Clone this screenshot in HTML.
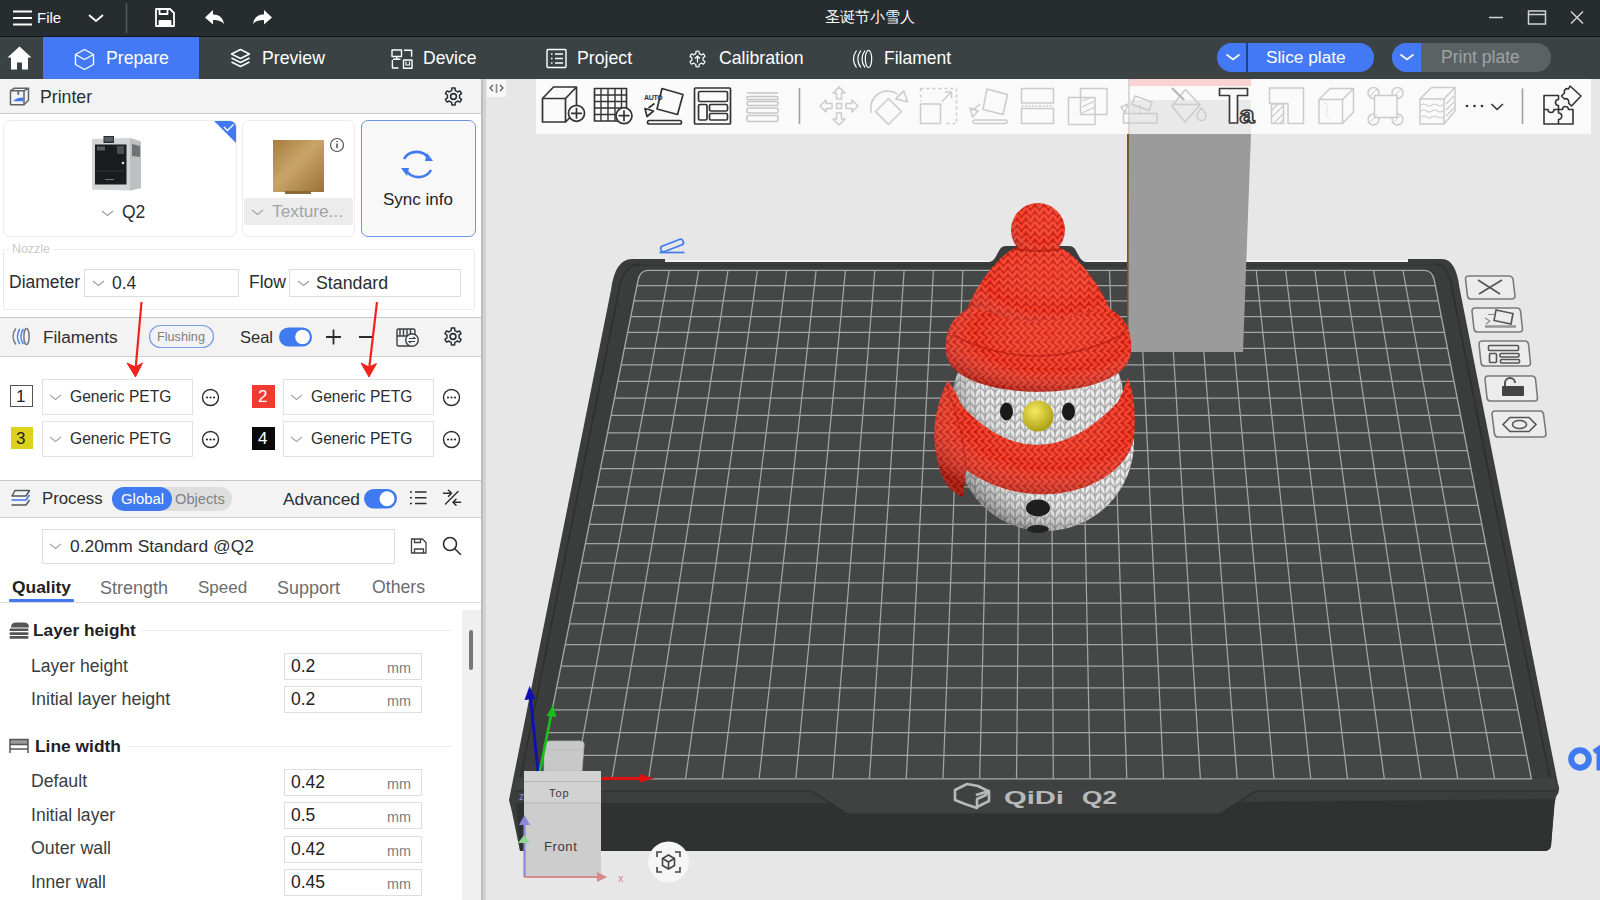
<!DOCTYPE html>
<html><head><meta charset="utf-8">
<style>
*{box-sizing:border-box;margin:0;padding:0}
html,body{width:1600px;height:900px;overflow:hidden;background:#e7e7e7;font-family:"Liberation Sans",sans-serif;position:relative}
.a{position:absolute}
.t{position:absolute;white-space:nowrap;line-height:1}
svg{position:absolute;overflow:visible}
</style></head><body>
<!-- title bar -->
<div class="a" style="left:0;top:0;width:1600px;height:37px;background:#272c2e"></div>
<svg style="left:0;top:0" width="300" height="37">
 <g stroke="#fff" stroke-width="2" fill="none">
  <path d="M13 11.5h19M13 18h19M13 24.5h19"/>
  <path d="M89 15l7 6 7-6" stroke-width="1.8"/>
 </g>
 <path d="M126.5 3v30" stroke="#555b5d" stroke-width="1.5"/>
 <g fill="none" stroke="#fff" stroke-width="1.8" stroke-linejoin="round">
  <path d="M156 9h14l4 4v13h-18z"/><path d="M159.5 9v5h8v-5"/><path d="M159.5 26v-5h11v5z" fill="#fff"/>
 </g>
 <path d="M205 17.5l8-7.5v4.5c6 0 10 3 11 9.5-2.5-3-5.5-4-11-4v4.5z" fill="#fff"/>
 <path d="M272 17.5l-8-7.5v4.5c-6 0-10 3-11 9.5 2.5-3 5.5-4 11-4v4.5z" fill="#fff"/>
</svg>
<div class="t" style="left:37px;top:10px;font-size:15px;color:#fff">File</div>
<div class="t" style="left:825px;top:10px;font-size:14.5px;color:#fff">圣诞节小雪人</div>
<svg style="left:1480px;top:0" width="120" height="37">
 <g stroke="#d0d3d4" stroke-width="1.5" fill="none">
  <path d="M1489 17.5h14" transform="translate(-1480 0)"/>
  <rect x="48.5" y="11" width="17" height="13" /><path d="M48.5 14.5h17"/>
  <path d="M91 11.5l12 12M103 11.5l-12 12"/>
 </g>
</svg>
<div class="a" style="left:0;top:36px;width:1600px;height:1.2px;background:#141718"></div>
<!-- tab bar -->
<div class="a" style="left:0;top:37.2px;width:1600px;height:41.8px;background:#3a4244"></div>
<div class="a" style="left:43px;top:37px;width:156px;height:42px;background:#4479f5"></div>
<svg style="left:0;top:38px" width="1000" height="42">
 <path d="M19.5 8.5l12 11h-3.5v12h-6v-7h-5v7h-6v-12h-3.5z" fill="#fff"/>
 <g fill="none" stroke="#fff" stroke-width="1.4" stroke-linejoin="round">
  <path d="M84.5 11.5l9 5v10l-9 5-9-5v-10z"/><path d="M75.5 16.5l9 5 9-5M84.5 21.5"/>
  <path d="M240.5 11.5l9 4.5-9 4.5-9-4.5z"/><path d="M231.5 20l9 4.5 9-4.5"/><path d="M231.5 24l9 4.5 9-4.5"/>
  <rect x="392" y="12" width="9.5" height="6.5"/><path d="M396.7 18.5v2.5M393 21.2h7.5M392.4 22v8h6M404 12.3h7.6v6.4"/><rect x="403.5" y="22" width="8.5" height="8.2"/><path d="M406 23.5v3.5h3.5v-3.5" stroke-width="1.1"/>
  <rect x="547" y="11.5" width="19" height="18" rx="1"/><path d="M551 16h1.5M555 16h8M551 20.5h1.5M555 20.5h8M551 25h1.5M555 25h8"/>
  <path d="M-1.95 -6.31L-1.74 -9.03A9.2 9.2 0 0 1 1.74 -9.03L1.95 -6.31A6.6 6.6 0 0 1 4.49 -4.84L4.49 -4.84L6.96 -6.02A9.2 9.2 0 0 1 8.69 -3.01L6.44 -1.46A6.6 6.6 0 0 1 6.44 1.46L6.44 1.46L8.69 3.01A9.2 9.2 0 0 1 6.96 6.02L4.49 4.84A6.6 6.6 0 0 1 1.95 6.31L1.95 6.31L1.74 9.03A9.2 9.2 0 0 1 -1.74 9.03L-1.95 6.31A6.6 6.6 0 0 1 -4.49 4.84L-4.49 4.84L-6.96 6.02A9.2 9.2 0 0 1 -8.69 3.01L-6.44 1.46A6.6 6.6 0 0 1 -6.44 -1.46L-6.44 -1.46L-8.69 -3.01A9.2 9.2 0 0 1 -6.96 -6.02L-4.49 -4.84A6.6 6.6 0 0 1 -1.95 -6.31Z" transform="translate(697.5 21) scale(.86)" stroke-linejoin="round"/><path d="M697.5 24.5v-6M695 20.5l2.5-2.5 2.5 2.5" stroke-width="1.3"/>
 </g>
 <g fill="none" stroke="#fff" stroke-width="1.2">
  <path d="M856.5 12.5Q850.5 21 856.5 29.5"/><path d="M860.8 12.5Q854.8 21 860.8 29.5"/><path d="M865 12.5Q859 21 865 29.5"/><ellipse cx="868.5" cy="21" rx="3.2" ry="8.7"/>
 </g>
</svg>
<div class="t" style="left:106px;top:50px;font-size:17.7px;color:#fff">Prepare</div>
<div class="t" style="left:262px;top:50px;font-size:17.7px;color:#fff">Preview</div>
<div class="t" style="left:423px;top:50px;font-size:17.5px;color:#fff">Device</div>
<div class="t" style="left:577px;top:50px;font-size:17.7px;color:#fff">Project</div>
<div class="t" style="left:719px;top:50px;font-size:17.7px;color:#fff">Calibration</div>
<div class="t" style="left:884px;top:50px;font-size:17.5px;color:#fff">Filament</div>
<!-- slice / print buttons -->
<div class="a" style="left:1217px;top:43px;width:157px;height:29px;border-radius:14.5px;background:#4479f5"></div>
<div class="a" style="left:1246px;top:43px;width:1.6px;height:29px;background:#1f3f8f"></div>
<div class="t" style="left:1266px;top:49px;font-size:17.3px;color:#fff">Slice plate</div>
<div class="a" style="left:1392px;top:43px;width:159px;height:29px;border-radius:14.5px;background:#5b6264;overflow:hidden"><div class="a" style="left:0;top:0;width:29px;height:29px;background:#4479f5"></div></div>
<div class="t" style="left:1441px;top:49px;font-size:17.5px;color:#9ea3a5">Print plate</div>
<svg style="left:0;top:0" width="1600" height="80">
 <g stroke="#fff" stroke-width="1.6" fill="none"><path d="M1226.5 54.5l6.5 5 6.5-5"/><path d="M1400.5 54.5l6.5 5 6.5-5"/></g>
</svg>
<!-- left panel -->
<div class="a" style="left:0;top:79px;width:481px;height:821px;background:#fff"></div>
<div class="a" style="left:481px;top:79px;width:1.5px;height:821px;background:#bcbcbc"></div>
<div class="a" style="left:482.5px;top:79px;width:3.5px;height:821px;background:#d3d3d3"></div>
<!-- printer header -->
<div class="a" style="left:0;top:79px;width:481px;height:35px;background:#f3f3f3;border-bottom:1.5px solid #cbcbcb"></div>
<svg style="left:0;top:79px" width="481" height="35">
 <g fill="none" stroke="#5f6365" stroke-width="1.5" stroke-linejoin="round">
  <path d="M10.5 11.8l3.5-2.5h14.5v12l-4.5 4.5h-13.5z"/><path d="M10.5 11.8h13.5v13.7M24 11.8l4.5-2.5"/><path d="M18.3 12v3.8" stroke-width="1.8"/>
 </g>
 <path d="M13 22.3c2.5-3 6-3.8 10.3-3.8v3.8z" fill="#3f7af0"/>
 <g transform="translate(453.5 17.5)" fill="none" stroke="#2b2e30" stroke-width="1.6">
  <path d="M-1.95 -6.31L-1.74 -9.03A9.2 9.2 0 0 1 1.74 -9.03L1.95 -6.31A6.6 6.6 0 0 1 4.49 -4.84L4.49 -4.84L6.96 -6.02A9.2 9.2 0 0 1 8.69 -3.01L6.44 -1.46A6.6 6.6 0 0 1 6.44 1.46L6.44 1.46L8.69 3.01A9.2 9.2 0 0 1 6.96 6.02L4.49 4.84A6.6 6.6 0 0 1 1.95 6.31L1.95 6.31L1.74 9.03A9.2 9.2 0 0 1 -1.74 9.03L-1.95 6.31A6.6 6.6 0 0 1 -4.49 4.84L-4.49 4.84L-6.96 6.02A9.2 9.2 0 0 1 -8.69 3.01L-6.44 1.46A6.6 6.6 0 0 1 -6.44 -1.46L-6.44 -1.46L-8.69 -3.01A9.2 9.2 0 0 1 -6.96 -6.02L-4.49 -4.84A6.6 6.6 0 0 1 -1.95 -6.31Z" stroke-linejoin="round" transform="scale(.93)"/>
  <circle r="2.9"/>
 </g>
</svg>
<div class="t" style="left:40px;top:89px;font-size:17.7px;color:#2b2e30">Printer</div>
<!-- printer cards -->
<div class="a" style="left:3px;top:120px;width:234px;height:117px;border:1px solid #ececec;border-radius:7px;background:#fff;overflow:hidden">
 <div class="a" style="right:0;top:0;width:0;height:0;border-top:22px solid #3f7af0;border-left:22px solid transparent"></div>
</div>
<svg style="left:0;top:0" width="481" height="300">
 <path d="M224 127l3.5 3.5 6-6" stroke="#fff" stroke-width="1.4" fill="none"/>
 <!-- printer image -->
 <path d="M92 139L130 138L141 141.5L141 188L130 190.5L92 189.5Z" fill="#d3d4d5"/>
 <path d="M130 138L141 141.5L141 188L130 190.5Z" fill="#bfc0c1"/>
 <rect x="95" y="144.5" width="31.5" height="40" fill="#1b1c1e"/>
 <path d="M132 144l8 2v11l-8-1z" fill="#707274"/>
 <rect x="103.5" y="136" width="10.5" height="7" fill="#2c2e30"/><rect x="104.5" y="137" width="8.5" height="4.5" fill="#56606a"/>
 <rect x="97" y="146.5" width="8" height="4" fill="#5a5c5e"/><rect x="117" y="146" width="7" height="8" fill="#4a4f55"/>
 <circle cx="123" cy="163" r="1.3" fill="#ddd"/>
 <path d="M105 179.5h9" stroke="#777" stroke-width="1"/><path d="M97 171h27" stroke="#3a3b3d" stroke-width=".8"/>
 <path d="M102 211l5.5 4.5 5.5-4.5" stroke="#9a9c9e" stroke-width="1.1" fill="none"/>
</svg>
<div class="t" style="left:122px;top:204px;font-size:17.5px;color:#2b2e30">Q2</div>
<div class="a" style="left:242px;top:120px;width:113px;height:117px;border:1px solid #ececec;border-radius:7px;background:#fff"></div>
<div class="a" style="left:244px;top:198px;width:109px;height:27px;background:#ececec;border-radius:2px"></div>
<svg style="left:0;top:0" width="481" height="300">
 <defs><linearGradient id="gold" x1="0" y1="0" x2="1" y2="1"><stop offset="0" stop-color="#a67c3e"/><stop offset=".45" stop-color="#c9a468"/><stop offset="1" stop-color="#9a7238"/></linearGradient></defs>
 <rect x="273" y="140" width="51" height="52" fill="url(#gold)"/>
 <rect x="285" y="191" width="26" height="3" fill="#8a6a3a"/>
 <circle cx="337" cy="145" r="6.5" fill="none" stroke="#555" stroke-width="1.2"/>
 <path d="M337 143.5v4.5M337 141v1" stroke="#555" stroke-width="1.6"/>
 <path d="M252 210l5.5 4.5 5.5-4.5" stroke="#a0a2a4" stroke-width="1.1" fill="none"/>
</svg>
<div class="t" style="left:272px;top:203px;font-size:17.3px;color:#a2a4a6">Texture...</div>
<div class="a" style="left:361px;top:120px;width:115px;height:117px;border:1.5px solid #6f93e6;border-radius:7px;background:#f8f8f8"></div>
<svg style="left:0;top:0" width="481" height="300">
 <g fill="none" stroke="#3f7af0" stroke-width="2.6">
  <path d="M404 159a14 13 0 0 1 25 0"/><path d="M431 170a14 13 0 0 1-25 0"/>
 </g>
 <path d="M427 153l6 8 -8 0z" fill="#3f7af0"/><path d="M407 176l-6-8 8 0z" fill="#3f7af0"/>
</svg>
<div class="t" style="left:383px;top:191px;font-size:17px;color:#1f2224">Sync info</div>
<!-- nozzle fieldset -->
<div class="a" style="left:3px;top:249px;width:472px;height:61px;border:1px solid #ebebeb;border-radius:2px"></div>
<div class="a" style="left:9px;top:243px;width:44px;height:12px;background:#fff"></div>
<div class="t" style="left:12px;top:243px;font-size:12.4px;color:#c8c9ca">Nozzle</div>
<div class="t" style="left:9px;top:274px;font-size:17.5px;color:#2b2e30">Diameter</div>
<div class="a" style="left:84px;top:269px;width:155px;height:28px;border:1px solid #dcdcdc;background:#fff"></div>
<div class="t" style="left:112px;top:275px;font-size:17.5px;color:#2b2e30">0.4</div>
<div class="t" style="left:249px;top:274px;font-size:17.5px;color:#2b2e30">Flow</div>
<div class="a" style="left:289px;top:269px;width:172px;height:28px;border:1px solid #dcdcdc;background:#fff"></div>
<div class="t" style="left:316px;top:275px;font-size:17.8px;color:#2b2e30">Standard</div>
<svg style="left:0;top:0" width="481" height="300">
 <g stroke="#9a9c9e" stroke-width="1.1" fill="none"><path d="M93 281l5.5 4.5 5.5-4.5"/><path d="M298 281l5.5 4.5 5.5-4.5"/></g>
</svg>
<!-- filaments header -->
<div class="a" style="left:0;top:316.5px;width:481px;height:40px;background:#f3f3f3;border-top:1.5px solid #c8c8c8;border-bottom:1.5px solid #cfcfcf"></div>
<svg style="left:0;top:317px" width="481" height="40">
 <g fill="none" stroke="#777b7d" stroke-width="1.2">
  <path d="M15.8 11.5Q10.3 19.5 15.8 27.5" stroke-width="1.5"/><path d="M19.8 12Q15 19.5 19.8 27" stroke="#4d7fe8" stroke-width="1.5"/><path d="M23.3 12Q18.5 19.5 23.3 27" stroke="#4d7fe8" stroke-width="1.5"/><ellipse cx="26.5" cy="19.5" rx="2.6" ry="8" stroke-width="1.5"/>
 </g>
 <rect x="149.5" y="8.5" width="64" height="22" rx="11" fill="#f2f2f2" stroke="#7c9fe8" stroke-width="1.2"/>
 <rect x="279" y="10.5" width="33" height="19" rx="9.5" fill="#3f7af0"/>
 <circle cx="302.5" cy="20" r="7.3" fill="#fff"/>
 <g stroke="#2b2e30" stroke-width="1.8"><path d="M326 20h15M333.5 12.5v15M359 20h14"/></g>
 <g fill="none" stroke="#3d4042" stroke-width="1.4">
  <path d="M410 29h-11.5a1.5 1.5 0 0 1-1.5-1.5v-14a1.5 1.5 0 0 1 1.5-1.5h15a1.5 1.5 0 0 1 1.5 1.5v4"/>
  <path d="M397 19h10M400 12v7M403.5 12v7M407 12v7M410.5 12v5"/>
  <circle cx="412" cy="23" r="6.3" fill="#f3f3f3"/>
  <path d="M409 21.5h6l-1.5-1.5M415 24.5h-6l1.5 1.5" stroke-width="1.1"/>
 </g>
 <g transform="translate(453 19.5)" fill="none" stroke="#2b2e30" stroke-width="1.6">
  <path d="M-1.95 -6.31L-1.74 -9.03A9.2 9.2 0 0 1 1.74 -9.03L1.95 -6.31A6.6 6.6 0 0 1 4.49 -4.84L4.49 -4.84L6.96 -6.02A9.2 9.2 0 0 1 8.69 -3.01L6.44 -1.46A6.6 6.6 0 0 1 6.44 1.46L6.44 1.46L8.69 3.01A9.2 9.2 0 0 1 6.96 6.02L4.49 4.84A6.6 6.6 0 0 1 1.95 6.31L1.95 6.31L1.74 9.03A9.2 9.2 0 0 1 -1.74 9.03L-1.95 6.31A6.6 6.6 0 0 1 -4.49 4.84L-4.49 4.84L-6.96 6.02A9.2 9.2 0 0 1 -8.69 3.01L-6.44 1.46A6.6 6.6 0 0 1 -6.44 -1.46L-6.44 -1.46L-8.69 -3.01A9.2 9.2 0 0 1 -6.96 -6.02L-4.49 -4.84A6.6 6.6 0 0 1 -1.95 -6.31Z" stroke-linejoin="round" transform="scale(.93)"/>
  <circle r="2.9"/>
 </g>
</svg>
<div class="t" style="left:43px;top:329px;font-size:17.2px;color:#2b2e30">Filaments</div>
<div class="t" style="left:157px;top:331px;font-size:12.7px;color:#7d8082">Flushing</div>
<div class="t" style="left:240px;top:329px;font-size:16.5px;color:#2b2e30">Seal</div>
<!-- filament rows -->
<div class="a" style="left:10px;top:385px;width:23px;height:22px;border:1.2px solid #555;background:#fff"></div>
<div class="t" style="left:16px;top:388px;font-size:17px;color:#1f2224">1</div>
<div class="a" style="left:252px;top:385px;width:23px;height:23px;background:#f03a32"></div>
<div class="t" style="left:258px;top:388px;font-size:17px;color:#fff">2</div>
<div class="a" style="left:11px;top:427px;width:22px;height:22px;background:#dcd21c"></div>
<div class="t" style="left:16px;top:430px;font-size:17px;color:#1f2224">3</div>
<div class="a" style="left:252px;top:427px;width:23px;height:23px;background:#0a0a0a"></div>
<div class="t" style="left:258px;top:430px;font-size:17px;color:#fff">4</div>
<div class="a" style="left:42px;top:379px;width:151px;height:36px;border:1px solid #e1e1e1;background:#fff"></div>
<div class="a" style="left:283px;top:379px;width:151px;height:36px;border:1px solid #e1e1e1;background:#fff"></div>
<div class="a" style="left:42px;top:421px;width:151px;height:36px;border:1px solid #e1e1e1;background:#fff"></div>
<div class="a" style="left:283px;top:421px;width:151px;height:36px;border:1px solid #e1e1e1;background:#fff"></div>
<div class="t" style="left:70px;top:389px;font-size:15.6px;color:#2b2e30">Generic PETG</div>
<div class="t" style="left:311px;top:389px;font-size:15.6px;color:#2b2e30">Generic PETG</div>
<div class="t" style="left:70px;top:431px;font-size:15.6px;color:#2b2e30">Generic PETG</div>
<div class="t" style="left:311px;top:431px;font-size:15.6px;color:#2b2e30">Generic PETG</div>
<svg style="left:0;top:0" width="481" height="900">
 <g stroke="#a4a6a8" stroke-width="1.1" fill="none">
  <path d="M50 395l5.5 4.5 5.5-4.5"/><path d="M291 395l5.5 4.5 5.5-4.5"/><path d="M50 437l5.5 4.5 5.5-4.5"/><path d="M291 437l5.5 4.5 5.5-4.5"/>
 </g>
 <g fill="none" stroke="#2b2e30" stroke-width="1.4">
  <circle cx="210.5" cy="397.5" r="8"/><circle cx="451.5" cy="397.5" r="8"/><circle cx="210.5" cy="439.5" r="8"/><circle cx="451.5" cy="439.5" r="8"/>
 </g>
 <g fill="#2b2e30">
  <circle cx="207" cy="397.5" r="1.1"/><circle cx="210.5" cy="397.5" r="1.1"/><circle cx="214" cy="397.5" r="1.1"/>
  <circle cx="448" cy="397.5" r="1.1"/><circle cx="451.5" cy="397.5" r="1.1"/><circle cx="455" cy="397.5" r="1.1"/>
  <circle cx="207" cy="439.5" r="1.1"/><circle cx="210.5" cy="439.5" r="1.1"/><circle cx="214" cy="439.5" r="1.1"/>
  <circle cx="448" cy="439.5" r="1.1"/><circle cx="451.5" cy="439.5" r="1.1"/><circle cx="455" cy="439.5" r="1.1"/>
 </g>
 <!-- red arrows -->
 <g stroke="#f0231c" stroke-width="2.2" fill="#f0231c">
  <path d="M141.5 302L135.5 370" fill="none"/><path d="M127 363l8.5 14 7-14-7 4z" stroke-width="1"/>
  <path d="M377 302L369 370" fill="none"/><path d="M361 363l8 14 7.5-13.5-7.5 3.5z" stroke-width="1"/>
 </g>
</svg>
<!-- process header -->
<div class="a" style="left:0;top:479.5px;width:481px;height:38.5px;background:#f3f3f3;border-top:1.5px solid #c8c8c8;border-bottom:1.5px solid #cfcfcf"></div>
<svg style="left:0;top:480px" width="481" height="40">
 <g fill="none" stroke="#55595b" stroke-width="1.5" stroke-linejoin="round">
  <path d="M15 10.5h14.5l-3.5 5.5h-14z"/><path d="M11.5 25h14.5l3.5-5"/>
 </g>
 <path d="M11.5 20h14.5l3.5-5" stroke="#3f7af0" stroke-width="1.5" fill="none" stroke-linejoin="round"/>
 <rect x="112" y="7" width="120" height="24" rx="12" fill="#dedede"/>
 <rect x="112" y="7" width="60" height="24" rx="12" fill="#3f7af0"/>
 <rect x="364" y="9" width="33" height="19.5" rx="9.75" fill="#3f7af0"/>
 <circle cx="387" cy="18.75" r="7.5" fill="#fff"/>
 <g stroke="#2b2e30" stroke-width="1.7">
  <path d="M415 12h11.5M415 17.75h11.5M415 23.5h11.5"/><path d="M410 12h2M410 17.75h2M410 23.5h2"/>
 </g>
 <g stroke="#2b2e30" stroke-width="1.5" fill="none" stroke-linejoin="round" stroke-linecap="round">
  <path d="M445.5 24l12.5-12.5"/><path d="M443.5 13.3h8M448.5 10.3l3 3-3 3M460.5 22.2h-7.5M456 19.2l-3 3 3 3"/>
 </g>
</svg>
<div class="t" style="left:42px;top:491px;font-size:16.8px;color:#2b2e30">Process</div>
<div class="t" style="left:121px;top:492px;font-size:14.9px;color:#fff">Global</div>
<div class="t" style="left:175px;top:492px;font-size:14.7px;color:#808385">Objects</div>
<div class="t" style="left:283px;top:491px;font-size:17.3px;color:#2b2e30">Advanced</div>
<!-- preset combo -->
<div class="a" style="left:42px;top:529px;width:353px;height:35px;border:1px solid #dedede;background:#fff"></div>
<div class="t" style="left:70px;top:538px;font-size:17.4px;color:#2b2e30">0.20mm Standard @Q2</div>
<svg style="left:0;top:0" width="481" height="900">
 <path d="M50 544l5.5 4.5 5.5-4.5" stroke="#a4a6a8" stroke-width="1.1" fill="none"/>
 <g fill="none" stroke="#3d4042" stroke-width="1.3" stroke-linejoin="round">
  <path d="M411.5 539h11l3.5 3.5v10.5h-14.5z"/><path d="M414.5 539v3.5h6v-3.5M414.5 553v-4h9v4"/>
 </g>
 <g fill="none" stroke="#2b2e30" stroke-width="1.6">
  <circle cx="450" cy="544" r="6.5"/><path d="M454.8 548.8l6 6"/>
 </g>
</svg>
<!-- tabs -->
<div class="t" style="left:12px;top:579px;font-size:17.4px;font-weight:bold;color:#1f2224">Quality</div>
<div class="t" style="left:100px;top:579px;font-size:18px;color:#6a6d70">Strength</div>
<div class="t" style="left:198px;top:579px;font-size:17px;color:#6a6d70">Speed</div>
<div class="t" style="left:277px;top:579px;font-size:18px;color:#6a6d70">Support</div>
<div class="t" style="left:372px;top:579px;font-size:17.7px;color:#6a6d70">Others</div>
<div class="a" style="left:0;top:601.5px;width:481px;height:1.5px;background:#dcdcdc"></div>
<div class="a" style="left:9px;top:599px;width:65px;height:3px;background:#3f7af0;border-radius:1px"></div>
<!-- scroll -->
<div class="a" style="left:462px;top:610px;width:19px;height:290px;background:#f0f0f0"></div>
<div class="a" style="left:469px;top:630px;width:3.5px;height:40px;background:#777;border-radius:2px"></div>
<!-- settings -->
<svg style="left:0;top:0" width="481" height="900">
 <g fill="#555" >
  <path d="M11 627.5q0-5 5-5h8q5 0 5 5z"/>
  <rect x="9.5" y="628.5" width="19" height="2.6" rx="1.2"/><rect x="9.5" y="632.3" width="19" height="2.6" rx="1.2"/><rect x="9.5" y="636.1" width="19" height="2.6" rx="1.2"/>
 </g>
 <path d="M142 630.5h310" stroke="#ececec" stroke-width="1"/>
 <g fill="none" stroke="#555" stroke-width="1.5">
  <rect x="10" y="739.5" width="18" height="5" fill="#999"/><path d="M10 745v8M28 745v8M10 749h18"/>
 </g>
 <path d="M128 746.5h324" stroke="#ececec" stroke-width="1"/>
</svg>
<div class="t" style="left:33px;top:622px;font-size:17.3px;font-weight:bold;color:#1f2224">Layer height</div>
<div class="t" style="left:35px;top:738px;font-size:17.4px;font-weight:bold;color:#1f2224">Line width</div>
<div class="t" style="left:31px;top:658px;font-size:17.6px;color:#3a3d40">Layer height</div>
<div class="t" style="left:31px;top:691px;font-size:17.9px;color:#3a3d40">Initial layer height</div>
<div class="t" style="left:31px;top:773px;font-size:17.7px;color:#3a3d40">Default</div>
<div class="t" style="left:31px;top:807px;font-size:17.6px;color:#3a3d40">Initial layer</div>
<div class="t" style="left:31px;top:840px;font-size:17.8px;color:#3a3d40">Outer wall</div>
<div class="t" style="left:31px;top:874px;font-size:17.5px;color:#3a3d40">Inner wall</div>
<div class="a" style="left:283.5px;top:652.5px;width:138px;height:27px;border:1px solid #dedede;background:#fff"></div>
<div class="a" style="left:283.5px;top:685.5px;width:138px;height:27px;border:1px solid #dedede;background:#fff"></div>
<div class="a" style="left:283.5px;top:768.5px;width:138px;height:27px;border:1px solid #dedede;background:#fff"></div>
<div class="a" style="left:283.5px;top:802px;width:138px;height:27px;border:1px solid #dedede;background:#fff"></div>
<div class="a" style="left:283.5px;top:835.5px;width:138px;height:27px;border:1px solid #dedede;background:#fff"></div>
<div class="a" style="left:283.5px;top:869px;width:138px;height:27px;border:1px solid #dedede;background:#fff"></div>
<div class="t" style="left:291px;top:658px;font-size:17.5px;color:#1f2224">0.2</div>
<div class="t" style="left:291px;top:691px;font-size:17.5px;color:#1f2224">0.2</div>
<div class="t" style="left:291px;top:774px;font-size:17.5px;color:#1f2224">0.42</div>
<div class="t" style="left:291px;top:807px;font-size:17.5px;color:#1f2224">0.5</div>
<div class="t" style="left:291px;top:841px;font-size:17.5px;color:#1f2224">0.42</div>
<div class="t" style="left:291px;top:874px;font-size:17.5px;color:#1f2224">0.45</div>
<div class="t" style="left:387px;top:661px;font-size:14.4px;color:#7a7d80">mm</div>
<div class="t" style="left:387px;top:694px;font-size:14.4px;color:#7a7d80">mm</div>
<div class="t" style="left:387px;top:777px;font-size:14.4px;color:#7a7d80">mm</div>
<div class="t" style="left:387px;top:810px;font-size:14.4px;color:#7a7d80">mm</div>
<div class="t" style="left:387px;top:844px;font-size:14.4px;color:#7a7d80">mm</div>
<div class="t" style="left:387px;top:877px;font-size:14.4px;color:#7a7d80">mm</div>
<!-- viewport -->
<svg style="left:0;top:0" width="1600" height="900">
<path d="M632 259 L665 259 L665 262 L989 262 Q992 262 995 258 L1000 249 Q1002 246 1006 246 L1069 246 Q1073 246 1075 249 L1080 258 Q1083 262 1086 262 L1408 262 L1408 259 L1442 259 Q1456 259 1459.5 288 L1558 784 Q1561 790 1556 797 L1554 806 L1551 846 Q1550 851 1544 851 L520 851 L512 812 L509.0 800 L511.6 787 L611 290 Q615 259 632 259 Z" fill="#3b3d3d"/>
<path d="M665 261.2H989M1086 261.2H1408" stroke="#f7f7f7" stroke-width="1.2"/>
<path d="M640 264 Q622 266 619 290 L518.6 787" stroke="#2e3030" stroke-width="1.6" fill="none"/>
<path d="M1435 264 Q1450 266 1452.3 290 L1551.7 787" stroke="#2e3030" stroke-width="1.6" fill="none"/>
<path d="M624.0 265 L1446.3 265" stroke="#2f3131" stroke-width="1.2" opacity=".6"/>
<path d="M515.4 778 L1554.9 778 L1555.5 791 L1256 791 L1220 814 L847 814 L812 791 L514.8 791 Z" fill="#404242"/>
<path d="M514.8 791 L812 791 L847 814 L1220 814 L1256 791 L1555.5 791 L1555 797 L1256 802 L1240 814 L1220 814 L847 814 L830 803 L514.6 803 Z" fill="#3c3e3e"/>
<path d="M514.8 791 L812 791 L847 814 L1220 814 L1256 791 L1555.5 791" stroke="#2c2e2e" stroke-width="1.2" fill="none"/>
<path d="M516.4 803 L830 803 L847 814 L1220 814 L1240 802 L1555 799 L1551 846 Q1550 851 1544 851 L520 851 Z" fill="#303232"/>
<path d="M648 270.4 L1424.3 270.4 Q1432.3 270.4 1434.3 280.4 L1531.4 778.8 L538.4 778.8 L638 280.4 Q640 270.4 648 270.4 Z" fill="#444746" stroke="#a9abaa" stroke-width="1.3"/>
<path d="M669.3 270.4L575.2 778.8M637.0 285.5L1435.3 285.5M698.7 270.4L612.0 778.8M633.9 300.9L1438.2 300.9M728.0 270.4L648.7 778.8M630.8 316.5L1441.3 316.5M757.4 270.4L685.5 778.8M627.6 332.4L1444.4 332.4M786.7 270.4L722.3 778.8M624.4 348.4L1447.5 348.4M816.1 270.4L759.1 778.8M621.1 364.8L1450.7 364.8M845.4 270.4L795.8 778.8M617.8 381.4L1453.9 381.4M874.8 270.4L832.6 778.8M614.5 398.2L1457.2 398.2M904.1 270.4L869.4 778.8M611.0 415.4L1460.6 415.4M933.4 270.4L906.2 778.8M607.5 432.8L1464.0 432.8M962.8 270.4L943.0 778.8M604.0 450.5L1467.4 450.5M992.1 270.4L979.7 778.8M600.4 468.5L1470.9 468.5M1021.5 270.4L1016.5 778.8M596.8 486.8L1474.5 486.8M1050.8 270.4L1053.3 778.8M593.0 505.4L1478.1 505.4M1080.2 270.4L1090.1 778.8M589.3 524.3L1481.8 524.3M1109.5 270.4L1126.8 778.8M585.4 543.5L1485.5 543.5M1138.9 270.4L1163.6 778.8M581.5 563.0L1489.3 563.0M1168.2 270.4L1200.4 778.8M577.5 582.9L1493.2 582.9M1197.5 270.4L1237.2 778.8M573.5 603.2L1497.2 603.2M1226.9 270.4L1274.0 778.8M569.4 623.8L1501.2 623.8M1256.2 270.4L1310.7 778.8M565.2 644.7L1505.3 644.7M1285.6 270.4L1347.5 778.8M560.9 666.1L1509.4 666.1M1314.9 270.4L1384.3 778.8M556.6 687.8L1513.7 687.8M1344.3 270.4L1421.1 778.8M552.2 709.9L1518.0 709.9M1373.6 270.4L1457.8 778.8M547.7 732.5L1522.4 732.5M1403.0 270.4L1494.6 778.8M543.1 755.4L1526.8 755.4" stroke="#a3a5a4" stroke-width="1.25" fill="none"/>
<g fill="none" stroke="#b8baba" stroke-width="2.6" stroke-linejoin="round"><path d="M955 790l12-6 11 2 10 5-2 4-9 4v9l-12-4-10-4z"/><path d="M976 795l13-4v10l-12 6"/></g>
<text x="1004" y="803.5" font-family="Liberation Sans" font-weight="bold" font-size="18" fill="#b8baba" textLength="60" lengthAdjust="spacingAndGlyphs">QiDi</text>
<text x="1082" y="803.5" font-family="Liberation Sans" font-weight="bold" font-size="18" fill="#b8baba" textLength="35" lengthAdjust="spacingAndGlyphs">Q2</text>
</svg>
<svg style="left:0;top:0" width="1600" height="900">
 <defs>
  <pattern id="knitW" width="10" height="8" patternUnits="userSpaceOnUse">
   <rect width="10" height="8" fill="#c4c4c4"/>
   <path d="M0.8 -1.5l4 6M9.2 -1.5l-4 6M0.8 6.5l4 6M9.2 6.5l-4 6" stroke="#ebebeb" stroke-width="2.6" stroke-linecap="round"/>
   <path d="M5 0v8M0 0v8" stroke="#8e8e8e" stroke-width="0.9"/>
   <path d="M0.5 3.5l4.5 4.5 4.5-4.5" stroke="#9a9a9a" stroke-width="0.9" fill="none"/>
  </pattern>
  <pattern id="knitR" width="9" height="7" patternUnits="userSpaceOnUse">
   <rect width="9" height="7" fill="#c81c10"/>
   <path d="M0.8 -1.5l3.6 5.5M8.2 -1.5l-3.6 5.5M0.8 5.5l3.6 5.5M8.2 5.5l-3.6 5.5" stroke="#f5402c" stroke-width="2.6" stroke-linecap="round"/>
  </pattern>
  <pattern id="knitRH" width="7" height="9" patternUnits="userSpaceOnUse">
   <rect width="7" height="9" fill="#c81c10"/>
   <path d="M-1.5 0.8l5.5 3.6M-1.5 8.2l5.5-3.6M5.5 0.8l5.5 3.6M5.5 8.2l5.5-3.6" stroke="#f3402b" stroke-width="2.6" stroke-linecap="round"/>
  </pattern>
  <radialGradient id="shadeW" cx="0.62" cy="0.38" r="0.68">
   <stop offset="0" stop-color="#fff" stop-opacity="0.2"/><stop offset="0.6" stop-color="#fff" stop-opacity="0"/><stop offset="1" stop-color="#000" stop-opacity="0.4"/>
  </radialGradient>
  <radialGradient id="shadeR" cx="0.58" cy="0.32" r="0.72">
   <stop offset="0" stop-color="#ff6a50" stop-opacity="0.2"/><stop offset="0.6" stop-color="#fff" stop-opacity="0"/><stop offset="1" stop-color="#300" stop-opacity="0.35"/>
  </radialGradient>
  <radialGradient id="nose" cx="0.4" cy="0.35" r="0.7"><stop offset="0" stop-color="#f4ec60"/><stop offset="1" stop-color="#a99a10"/></radialGradient>
 </defs>
 <!-- tower -->
 <path d="M1128 133L1251 133L1243 352L1128 352Z" fill="#9b9b9b"/>
 <path d="M1127 133L1129 133L1128.5 330L1127 330Z" fill="#7a5528"/>
 <!-- pen icon -->
 <g stroke="#3f7af0" stroke-width="1.7" fill="none"><path d="M659.5 252.5h25"/><rect x="660" y="242.5" width="24" height="6" rx="3" transform="rotate(-21 672 245.5)"/></g>
 <!-- body -->
 <circle cx="1045" cy="442" r="89" fill="url(#knitW)"/>
 <circle cx="1045" cy="442" r="89" fill="url(#shadeW)"/>
 <!-- head -->
 <ellipse cx="1038" cy="395" rx="85" ry="68" fill="url(#knitW)"/>
 <ellipse cx="1038" cy="395" rx="85" ry="68" fill="url(#shadeW)"/>
 <!-- buttons -->
 <ellipse cx="1038" cy="508" rx="12" ry="8.5" fill="#1e1e1e"/>
 <ellipse cx="1038" cy="529" rx="11" ry="4" fill="#222"/>
 <!-- scarf -->
 <path id="scarf" d="M948 380 Q956 392 962 406 Q1038 486 1118 402 Q1124 390 1128 378 Q1137 400 1134 438 C1125 488 1035 518 966 470 L963 497 Q946 490 940 470 Q931 440 936 416 Q940 395 948 380Z" fill="url(#knitRH)"/>
 <path d="M948 380 Q956 392 962 406 Q1038 486 1118 402 Q1124 390 1128 378 Q1137 400 1134 438 C1125 488 1035 518 966 470 L963 497 Q946 490 940 470 Q931 440 936 416 Q940 395 948 380Z" fill="url(#shadeR)"/>
 <path d="M966 470 Q964 430 946 385" stroke="#a8140c" stroke-width="1.2" fill="none" opacity=".5"/>
 <!-- eyes nose -->
 <ellipse cx="1006.5" cy="411.5" rx="6.5" ry="9" fill="#1a1a1a"/>
 <ellipse cx="1068.5" cy="411.5" rx="6.5" ry="9" fill="#1a1a1a"/>
 <circle cx="1038" cy="416" r="15.5" fill="url(#nose)"/>
 <!-- pompom -->
 <circle cx="1038" cy="230" r="27" fill="url(#knitR)"/>
 <circle cx="1038" cy="230" r="27" fill="url(#shadeR)"/>
 <!-- hat cone -->
 <path d="M960 332 C968 292 1000 252 1018 247 L1058 247 C1076 252 1108 292 1118 332 Z" fill="url(#knitR)"/>
 <path d="M960 332 C968 292 1000 252 1018 247 L1058 247 C1076 252 1108 292 1118 332 Z" fill="url(#shadeR)"/>
 <path d="M1014 249 Q1038 253 1062 249" stroke="#8f1006" stroke-width="2" fill="none" opacity=".55"/>
 <!-- brim -->
 <path d="M946 352 C944 325 958 312 975 306 Q1038 336 1103 306 C1120 312 1133 325 1131 352 C1128 405 949 405 946 352Z" fill="url(#knitRH)"/>
 <path d="M946 352 C944 325 958 312 975 306 Q1038 336 1103 306 C1120 312 1133 325 1131 352 C1128 405 949 405 946 352Z" fill="url(#shadeR)"/>
 <path d="M952 335 Q1038 378 1126 333" stroke="#a8140c" stroke-width="1.6" fill="none" opacity=".55"/>
 <!-- plate side buttons -->
 <g fill="#ececec" stroke="#7a7a7a" stroke-width="1.6" stroke-linejoin="round">
  <path d="M1469 276h40q3 0 4 3l2 17q0 3-3 3h-41q-3 0-3.5-3l-2-17q0-3 3.5-3z"/>
  <path d="M1476 308h41q3 0 3.5 3l2 18q0 3-3 3h-42q-3 0-3.5-3l-2-18q0-3 3-3z"/>
  <path d="M1483 341h42q3 0 3.5 3l2 19q0 3-3 3h-43q-3 0-3.5-3l-2-19q0-3 3.5-3z"/>
  <path d="M1489 376h43q3 0 3.5 3l2 19q0 3-3 3h-44q-3 0-3.5-3l-2-19q0-3 3-3z"/>
  <path d="M1496 411h44q3 0 3.5 3l2.5 20q0 3-3 3h-45q-3 0-3.5-3l-2.5-20q0-3 3.5-3z"/>
 </g>
 <g stroke="#555" stroke-width="1.6" fill="none">
  <path d="M1478 280l22 14M1502 280l-23 14"/>
  <path d="M1496 310l17 3.5-2 10.5-17-3.5z"/><path d="M1485 326.5h31" stroke-width="2.6" stroke="#999"/><path d="M1485 318l5 3-4 3M1488 314.5h7" stroke="#888" stroke-width="1.1"/>
  <rect x="1488.5" y="345.5" width="30" height="5" rx="1"/><rect x="1489.5" y="353.5" width="7" height="9" rx="1"/><rect x="1500" y="353.5" width="19" height="3.5" rx="1"/><rect x="1500.5" y="359.5" width="19" height="3.5" rx="1"/>
  <path d="M1505 386v-3a5 5 0 0 1 10 0" stroke-width="2"/>
  <path d="M1503 424.5l7-7h19l7 7-7 7h-19z"/><ellipse cx="1519.5" cy="424.5" rx="7" ry="4"/>
 </g>
 <rect x="1502" y="386" width="22" height="10" rx="1" fill="#444"/>
 <!-- 01 label -->
 <ellipse cx="1580" cy="759" rx="8.8" ry="8.8" fill="none" stroke="#3f7af0" stroke-width="6"/><path d="M1594 752l5-3.5v22" stroke="#3f7af0" stroke-width="5" fill="none"/>
 <!-- view cube -->
 <path d="M544 771v-24q0-6 6-6h30q5 0 4 5l-2 25z" fill="#c8c8c8" stroke="#b0b0b0" stroke-width=".8"/>
 <path d="M546 750h37" stroke="#bdbdbd" stroke-width="1"/>
 <rect x="524" y="771" width="77" height="106" fill="#cdcdcd"/>
 <rect x="524" y="771" width="77" height="32" fill="#d2d2d2"/>
 <path d="M524 781.5h77M524 803h77" stroke="#b8b8b8" stroke-width="1.2"/>
 <text x="549" y="797" font-family="Liberation Sans" font-size="11" fill="#3a3a3a" letter-spacing="1">Top</text>
 <text x="544" y="851" font-family="Liberation Sans" font-size="13" fill="#3a3a3a" letter-spacing=".6">Front</text>
 <path d="M538 771L530 692" stroke="#1010b0" stroke-width="3"/><path d="M524.5 700l5-14 6 13z" fill="#1010b0"/>
 <path d="M540 771L552 710" stroke="#18c018" stroke-width="2.6"/><path d="M546.5 716l6.5-11 3.5 12z" fill="#18c018"/>
 <path d="M601 778.5h45" stroke="#e01010" stroke-width="2.8"/><path d="M640 774l14 4.5-14 4z" fill="#e01010"/>
 <path d="M524.5 877V822" stroke="#8a88d8" stroke-width="2.2"/><path d="M519 825l5.5-10 5.5 10z" fill="#8a88d8"/>
 <path d="M524 877h74" stroke="#d68a8a" stroke-width="2.2"/><path d="M597 872l10 5-10 5z" fill="#d68a8a"/>
 <path d="M518 843l6-8 6 8z" fill="#8cd88c"/>
 <text x="519" y="800" font-family="Liberation Sans" font-size="10" fill="#8a88d8">z</text>
 <text x="618" y="882" font-family="Liberation Sans" font-size="11" fill="#d68a8a">x</text>
 <!-- reset view -->
 <circle cx="668.5" cy="862" r="20.5" fill="#f6f6f6"/>
 <g stroke="#444" stroke-width="1.6" fill="none">
  <path d="M657 857v-5h5M675 852h5v5M680 867v5h-5M662 872h-5v-5"/>
  <path d="M668.5 855l6 3.5v7l-6 3.5-6-3.5v-7z"/><path d="M662.5 858.5l6 3.5 6-3.5M668.5 862v7"/>
 </g>
</svg>
<!-- toolbar -->
<div class="a" style="left:487px;top:80px;width:19px;height:17px;background:#f7f7f7"></div>
<svg style="left:0;top:0" width="1600" height="140">
 <g stroke="#555" stroke-width="1.2" fill="none"><path d="M493 85l-3 3 3 3M500 85l3 3-3 3"/><path d="M496.5 84v9" stroke="#888" stroke-width="1.6"/></g>
</svg>
<div class="a" style="left:536px;top:79px;width:1055px;height:54.5px;background:#fafafa"></div>
<div class="a" style="left:1129px;top:79px;width:122px;height:7px;background:#fbd2d2"></div>
<div class="a" style="left:1129px;top:100px;width:122px;height:33.5px;background:#e9e9e9"></div>
<div class="a" style="left:1128px;top:79px;width:1.5px;height:54.5px;background:#e2d7cf"></div>
<svg style="left:0;top:0" width="1600" height="140">
 <g fill="none" stroke="#333" stroke-width="1.7" stroke-linejoin="round">
  <path d="M542.5 98.5h23v23.5h-23z"/><path d="M542.5 98.5l11-11.5h23l-11 11.5M576.5 87v18M565.5 122l5-5"/>
  <circle cx="576.5" cy="113.3" r="8" fill="#fafafa"/><path d="M571 113.3h11M576.5 107.8v11"/>
  <rect x="594.5" y="88.5" width="32" height="32.5"/><path d="M601 88.5v32.5M608 88.5v32.5M615 88.5v32.5M621.5 88.5v32.5M594.5 95h32M594.5 101.5h32M594.5 108h32M594.5 114.5h32" stroke-width="1.4"/>
  <circle cx="624" cy="115.7" r="8" fill="#fafafa"/><path d="M618.5 115.7h11M624 110.2v11"/>
  <path d="M662 88.5l21 6-5.5 20-20.5-5.5z"/><path d="M654.5 103.5l-6 4.5"/><path d="M645 108.5l8.5 2.5-6.5 5.5z"/><rect x="647.5" y="120.5" width="34" height="3.5" rx="1.75"/>
  <rect x="694.5" y="88" width="36" height="36" rx="1"/><rect x="698.5" y="91.5" width="29" height="10" rx="1.5"/><rect x="698.5" y="104.5" width="8.5" height="15.5" rx="1.5"/><rect x="709.5" y="104.5" width="18" height="6.5" rx="1.5"/><rect x="709.5" y="113.5" width="18" height="6.5" rx="1.5"/>
 </g>
 <text x="644" y="100" font-family="Liberation Sans" font-weight="bold" font-size="7" fill="#333" letter-spacing="-.3">AUTO</text>
 <g fill="none" stroke="#c6c6c6" stroke-width="1.6">
  <path d="M747 93h31"/><rect x="747" y="96.5" width="31" height="3" rx="1.5"/><rect x="747" y="101.5" width="31" height="4" rx="1.5"/><rect x="747" y="108" width="31" height="5" rx="1.5"/><rect x="747" y="115.5" width="31" height="6" rx="1.5"/>
 </g>
 <path d="M799.5 88v36M1522.5 88.5v35.5" stroke="#a0a0a0" stroke-width="1.6"/>
 <g fill="none" stroke="#cbcbcb" stroke-width="1.5" stroke-linejoin="round">
  <path d="M839 87l-6 6h3.5v6h5v-6h3.5z"/><path d="M839 125l-6-6h3.5v-6h5v6h3.5z"/><path d="M820 106l6-6v3.5h6v5h-6v3.5z"/><path d="M858 106l-6-6v3.5h-6v5h6v3.5z"/><rect x="836.5" y="103.5" width="5" height="5"/>
  <path d="M871.5 113a17 17 0 0 1 26-19"/><path d="M895.8 98.9l8-8 3.7 10.8z"/><path d="M888.5 98.5l13 13-13 13-13-13z"/>
  <path d="M920.5 88.5h36v35h-13M920.5 88.5v13" stroke-dasharray="3 3"/><rect x="920.5" y="104" width="20" height="19.5"/><path d="M942 101.5l9-9M945 92h6.5v6.5"/>
  <path d="M987 89l20.5 5.5-4.5 20-20-5z"/><path d="M980 104l-7 6"/><path d="M970 108l8 3-5.5 6z"/><rect x="973" y="120" width="34" height="3.5" rx="1.75"/>
  <rect x="1021.5" y="88.5" width="32" height="14.5"/><rect x="1021.5" y="108.5" width="32" height="15"/><path d="M1021.5 106h32" stroke-dasharray="2 1.5"/>
  <rect x="1068.5" y="97.5" width="26.5" height="27"/><rect x="1080.5" y="88.5" width="26.5" height="26"/><path d="M1082 101l8-3M1082 107l13-6M1082 113l13-6" stroke-width="1.1"/>
  <path d="M1135 96l17 6-3 8.5-17-6z"/><path d="M1121 107l7-3-3 9z"/><rect x="1123.5" y="113.5" width="33.5" height="9.5"/><path d="M1134 104v9M1140 105v8" stroke-dasharray="1.5 1.5" stroke-width="1"/>
  <path d="M1172 106l13.5-16.5 14.5 15.5-15 17z"/><path d="M1172 104.5h28"/><path d="M1172 88l12 12" stroke="#b8b8b8" stroke-width="2.2"/><path d="M1206 116a4.5 4.5 0 0 1-9 0c0-3 4.5-8 4.5-8s4.5 5 4.5 8z"/>
  <path d="M1269.5 88h34v35.5h-15.5v-20h-18.5z"/><rect x="1271.5" y="104" width="12" height="19.5"/><path d="M1272 110l6-6M1272 117l11-11M1274 123l9.5-9.5M1280 123l3.5-3.5" stroke-width="1.1"/>
  <rect x="1319" y="99.5" width="23.5" height="24"/><path d="M1319 99.5l11-11h23.5l-11 11M1353.5 88.5v23.5l-11 11.5"/><path d="M1325 103l3 5-2 6 3 5" stroke-width="1" stroke-dasharray="1.5 1.5"/>
  <circle cx="1373.5" cy="93" r="5.5"/><circle cx="1397.5" cy="93" r="5.5"/><circle cx="1373.5" cy="119.5" r="5.5"/><circle cx="1397.5" cy="119.5" r="5.5"/>
  <rect x="1374.5" y="95.5" width="22.5" height="22" fill="#fafafa"/>
  <path d="M1420 99h24v25h-24z"/><path d="M1420 99l11.5-11.5h23.5l-11 11.5M1455 87.5v23.5l-11 13"/>
  <path d="M1421 105q3-2 5.5 0t5.5 0 5.5 0 5.5 0M1421 111q3-2 5.5 0t5.5 0 5.5 0 5.5 0M1421 117q3-2 5.5 0t5.5 0 5.5 0 5.5 0M1446 104l8-8M1446 110l8-8M1446 116l8-8" stroke-width="1.2"/>
 </g>
 <g stroke="#cbcbcb" stroke-width="1" fill="none"><path d="M1370 96l7-7M1394 96l7-7M1370 122l7-7M1394 122l7-7"/></g>
 <g fill="#fafafa" stroke="#3a3a3a" stroke-width="1.7" stroke-linejoin="round">
  <path d="M1219.5 88.5h28v7h-10v27.5h-8v-27.5h-10z"/>
 </g>
 <text x="1239.5" y="123" font-family="Liberation Sans" font-weight="bold" font-size="24" fill="#fafafa" stroke="#3a3a3a" stroke-width="1.6" textLength="15" lengthAdjust="spacingAndGlyphs">a</text>
 <g fill="#333"><circle cx="1467" cy="106" r="1.3"/><circle cx="1474.5" cy="106" r="1.3"/><circle cx="1482" cy="106" r="1.3"/></g>
 <path d="M1491.5 104l5.5 5.5 6-5.5" stroke="#333" stroke-width="1.6" fill="none"/>
 <g fill="none" stroke="#333" stroke-width="1.6" stroke-linejoin="round">
  <path d="M1544 95.5h14.5v4a3 3 0 0 0 0 6v4h4a3 3 0 0 1 6 0h4.5v14.5h-29z"/><path d="M1544 109.5h4a3 3 0 0 0 6 0h4.5v3.5a3 3 0 0 1 0 6.5v4.5"/>
  <path d="M1570 86l11 10-9.5 10-3-3a3 3 0 0 0-4-4l-3-3 3-3a3 3 0 0 1 4-4z"/>
 </g>
</svg>
</body></html>
